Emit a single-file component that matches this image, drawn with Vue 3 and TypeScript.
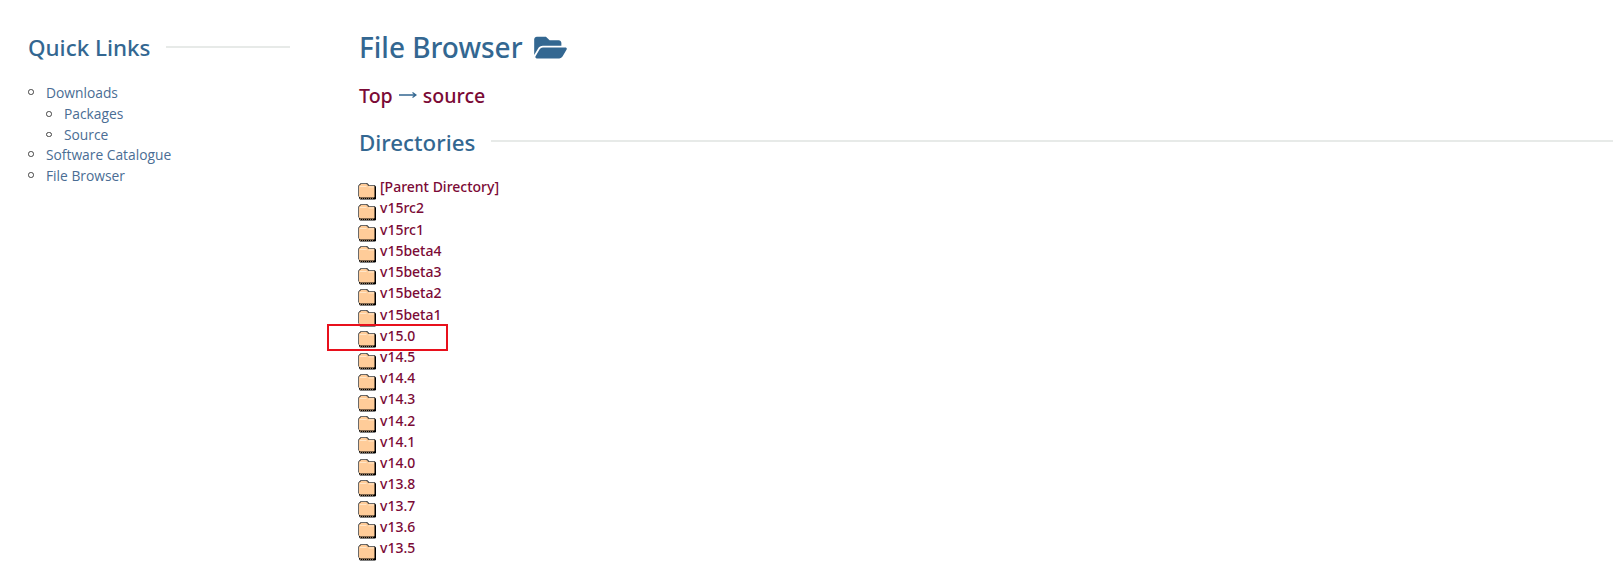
<script setup lang="ts">
const quickLinks = [
  { label: 'Downloads', children: ['Packages', 'Source'] },
  { label: 'Software Catalogue', children: [] as string[] },
  { label: 'File Browser', children: [] as string[] },
]

const directories = [
  '[Parent Directory]',
  'v15rc2',
  'v15rc1',
  'v15beta4',
  'v15beta3',
  'v15beta2',
  'v15beta1',
  'v15.0',
  'v14.5',
  'v14.4',
  'v14.3',
  'v14.2',
  'v14.1',
  'v14.0',
  'v13.8',
  'v13.7',
  'v13.6',
  'v13.5',
]
</script>

<template>
  <div class="page">
    <aside class="sidebar">
      <div class="side-heading">
        <h2>Quick Links</h2>
        <span class="rule"></span>
      </div>
      <ul class="links">
        <li v-for="link in quickLinks" :key="link.label">
          <a href="#">{{ link.label }}</a>
          <ul v-if="link.children.length" class="links sub">
            <li v-for="child in link.children" :key="child">
              <a href="#">{{ child }}</a>
            </li>
          </ul>
        </li>
      </ul>
    </aside>

    <main class="content">
      <h1>
        File Browser
        <svg class="open-folder" viewBox="0 0 576 512" aria-hidden="true">
          <path
            d="M572.7 292.1 500.3 416.2A64 64 0 0 1 445 448H45c-18.500 0-30.100-20.100-20.700-36.100l72.400-124.100A64 64 0 0 1 152 256h400c18.500 0 30.100 20.100 20.700 36.100zM152 224h328v-48c0-26.500-21.500-48-48-48H272l-64-64H48C21.500 64 0 85.500 0 112v278l69.100-118.400C86.200 242.300 118 224 152 224z"
          />
        </svg>
      </h1>

      <p class="crumbs">
        <a href="#">Top</a>
        <svg class="arrow" viewBox="0 0 18 10" aria-hidden="true">
          <path d="M0 5h16.500M13.500 2.500 17 5l-3.500 2.500" />
        </svg>
        <a href="#">source</a>
      </p>

      <div class="section-heading">
        <h2>Directories</h2>
        <span class="rule"></span>
      </div>

      <ul class="dirs">
        <li v-for="dir in directories" :key="dir" :class="{ marked: dir === 'v15.0' }">
          <svg class="folder" viewBox="0 0 20 20" aria-hidden="true">
            <path d="M2 18V6l2-3h6l2 2h5.500l1.500 1.500V19l-1 .5H3z" fill="#000" />
            <path d="M1.500 16.500V5.500l2-2h6.200l2 2h5.800l.5 1" fill="none" stroke="#6a6a6a" stroke-width="1" />
            <path d="M2 16.500V6l2-2h5.500l2 2H17l.5.500V17l-.5.500H3z" fill="#ffcc99" />
            <path d="M3 6.500h6.500M11.500 7H17" stroke="#ffe6c8" stroke-width="1" />
            <path d="M3 18.500h14" stroke="#8a7056" stroke-width="1" stroke-dasharray="1 1" />
          </svg>
          <a href="#">{{ dir }}</a>
        </li>
      </ul>
    </main>
  </div>
</template>

<style>
html,
body {
  margin: 0;
  background: #fff;
}
</style>

<style scoped>
.page {
  display: flex;
  height: 563px;
  overflow: hidden;
  font-family: 'Noto Sans', 'Open Sans', sans-serif;
  font-size: 14px;
  color: #333;
}

h1,
h2,
p,
ul {
  margin: 0;
  padding: 0;
}

h1,
h2 {
  font-weight: 500;
  color: #336791;
}

a {
  text-decoration: none;
}

.rule {
  flex: 1;
  height: 2px;
  background: #e7eae8;
}

.sidebar {
  width: 262px;
  margin-left: 28px;
  padding-top: 32px;
  flex-shrink: 0;
}

.side-heading {
  display: flex;
  align-items: center;
  gap: 16px;
  height: 32px;
}

.side-heading h2 {
  font-size: 22.400px;
  line-height: 32px;
}

.side-heading .rule {
  margin-bottom: 3px;
}

.links {
  list-style: none;
}

.sidebar > .links {
  margin-top: 18px;
}

.links li {
  position: relative;
  padding-left: 18px;
  line-height: 21px;
}

.links li::before {
  content: '';
  position: absolute;
  left: 0;
  top: 7px;
  width: 3.500px;
  height: 3.500px;
  border: 1.500px solid #444;
  border-radius: 50%;
}

.links a {
  color: #4a6d94;
  font-size: 13.800px;
  font-family: 'Open Sans', sans-serif;
}

.sub {
  margin-top: 1px;
  margin-bottom: -1px;
}

.sub li {
  line-height: 20.500px;
}

.content {
  flex: 1;
  min-width: 0;
  margin-left: 69px;
  padding-top: 26px;
}

h1 {
  display: flex;
  align-items: center;
  gap: 11px;
  font-size: 28px;
  line-height: 42px;
}

.open-folder {
  width: 33px;
  height: 29px;
  fill: #336791;
}

.crumbs {
  margin-top: 15px;
  font-size: 19.600px;
  font-weight: 500;
  line-height: 26px;
  display: flex;
  align-items: center;
  gap: 6px;
}

.crumbs a {
  color: #7b0a36;
}

.arrow {
  width: 18px;
  height: 10px;
  margin-bottom: 3px;
  fill: none;
  stroke: #336791;
  stroke-width: 1.3;
}

.section-heading {
  display: flex;
  align-items: center;
  gap: 16px;
  margin-top: 19px;
  height: 30px;
}

.section-heading h2 {
  font-size: 22.300px;
  line-height: 30px;
}

.section-heading .rule {
  margin-bottom: 5px;
}

.dirs {
  list-style: none;
  margin-top: 18px;
}

.dirs li {
  position: relative;
  display: flex;
  align-items: center;
  gap: 3px;
  height: 21.240px;
}

.dirs a {
  color: #7b0a36;
  font-weight: 500;
  line-height: 21px;
}

.folder {
  width: 20px;
  height: 20px;
  margin-top: 6px;
  margin-left: -2px;
  flex-shrink: 0;
}

.marked::after {
  content: '';
  position: absolute;
  left: -32px;
  top: -1px;
  width: 117px;
  height: 23px;
  border: 2px solid #e8101c;
}
</style>
